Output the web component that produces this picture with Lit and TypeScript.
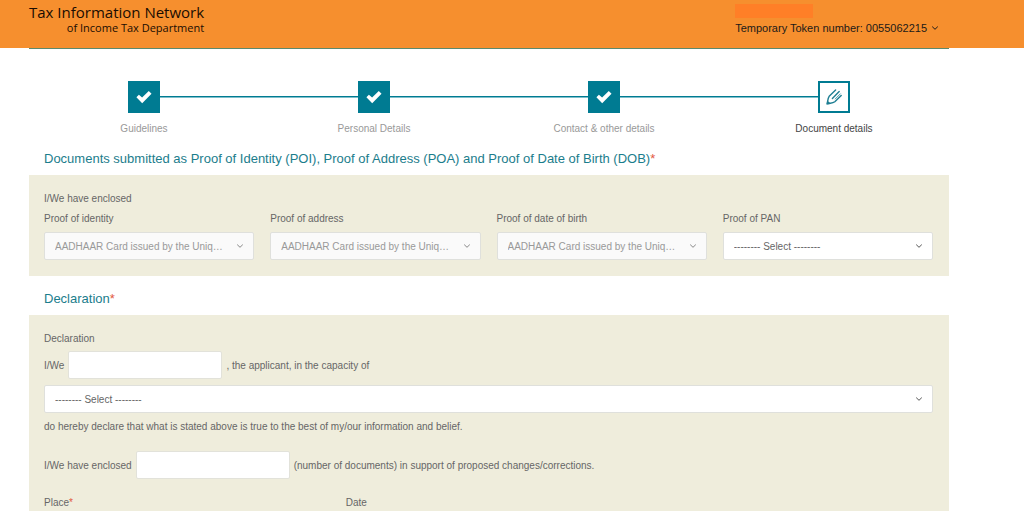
import { LitElement, html, css } from "lit";
import { customElement, property } from "lit/decorators.js";
import { classMap } from "lit/directives/class-map.js";

const chevron = html`<svg class="chevron" viewBox="0 0 8 8" width="8" height="8" aria-hidden="true">
  <path d="M1.2 2.6 4 5.3 6.8 2.6" fill="none" stroke="currentColor" stroke-width="1" />
</svg>`;

const check = html`<svg viewBox="0 0 16 16" width="16" height="16" aria-hidden="true">
  <path d="M0.4 8.2 2.9 5.7 6.1 8.6 12.8 2 15.5 4.7 6.2 14.2Z" fill="#fff" />
</svg>`;

const pencil = html`<svg viewBox="0 0 16 16" width="16" height="16" aria-hidden="true">
  <g fill="none" stroke="#1f7f93" stroke-width="1.4" stroke-linejoin="round" stroke-linecap="round">
    <path d="M9.6 0.9 3.2 7.2C2 8.6 1.8 11.6 1.2 14.8 4.4 14.2 7.4 14 8.8 12.8L15.2 6.4" />
    <path d="M6.4 9.6 13.2 2.4" />
  </g>
  <path d="M9 10.2 14.6 4.6" stroke="#1f7f93" stroke-width="0.8" />
  <path d="M0.4 15.6 1.3 11.4 4.8 14.6Z" fill="#1f7f93" />
</svg>`;

@customElement("select-field")
class SelectField extends LitElement {
  @property() label = "";
  @property() value = "-------- Select --------";
  @property({ type: Boolean }) locked = false;
  @property({ type: Boolean }) bare = false;

  static styles = css`
    :host { display: block; min-width: 0; }
    .caption { display: block; line-height: 15px; margin-bottom: 6px; }
    .box { display: grid; align-items: center; }
    select {
      grid-area: 1 / 1; appearance: none; box-sizing: border-box; width: 100%; min-width: 0;
      height: 28px; margin: 0; padding: 0 25px 0 10px; border: 1px solid #dfe0dc; border-radius: 2px;
      background: #fff; color: #666; font: inherit; text-overflow: ellipsis; overflow: hidden; white-space: nowrap;
    }
    select:disabled { background: #fafafa; color: #999; opacity: 1; }
    .chevron { grid-area: 1 / 1; justify-self: end; margin-right: 10px; pointer-events: none; color: #555; }
    .locked .chevron { color: #888; }
  `;

  render() {
    return html`
      ${this.bare ? "" : html`<label class="caption" for="field">${this.label}</label>`}
      <div class=${classMap({ box: true, locked: this.locked })}>
        <select id="field" aria-label=${this.label} ?disabled=${this.locked}><option>${this.value}</option></select>
        ${chevron}
      </div>`;
  }
}

@customElement("app-root")
class AppRoot extends LitElement {
  private steps = ["Guidelines", "Personal Details", "Contact & other details", "Document details"];
  private proofs = ["Proof of identity", "Proof of address", "Proof of date of birth"];
  private card = "AADHAAR Card issued by the Unique Identification Authority of India";

  static styles = css`
    :host {
      display: block; height: 100vh; overflow: hidden; background: #fff; color: #666;
      font: 10px/15px "Liberation Sans", Arial, sans-serif;
    }
    header {
      display: flex; justify-content: space-between; box-sizing: border-box; height: 48px;
      padding: 4px 85px 0 29px; background: #f68f2e; color: #1c1a18;
    }
    .brand { text-align: right; font-family: "Open Sans", "Noto Sans", sans-serif; color: #1a0d02; }
    .brand-name { font-size: 15px; line-height: 17px; }
    .brand-sub { font-size: 11px; line-height: 14px; font-weight: 500; }
    .name { width: 78px; height: 14px; background: #ff7f27; }
    .token {
      display: flex; align-items: center; gap: 4px; margin-top: 3px; padding: 0; border: 0;
      background: none; color: inherit; font: inherit; font-size: 11px; line-height: 14px;
    }
    main { margin: 0 75px 0 29px; border-top: 1px solid #5c8a6c; }
    .steps { display: grid; grid-template-columns: repeat(4, 1fr); margin: 0; padding: 32px 0 0; list-style: none; }
    .step { display: grid; grid-template-columns: 1fr 32px 1fr; align-items: center; row-gap: 8px; color: #999; }
    .rail { height: 1px; background: #007b92; border-bottom: 1px solid #7fbfcb; }
    .step:first-child .rail:first-child, .step:last-child .after { visibility: hidden; }
    .mark { display: grid; place-items: center; box-sizing: border-box; height: 32px; background: #007b92; }
    .step-name { grid-column: 1 / -1; text-align: center; }
    .current { color: #444; }
    .current .mark { background: #fff; border: 2px solid #007b92; }
    h2 { margin: 0; padding: 12px 15px 6px; font-size: 13px; line-height: 21px; font-weight: 400; color: #1b7d8c; }
    .req { color: #e2583e; }
    .panel { padding: 16px 16px 16px 15px; background: #efeddc; }
    p { margin: 0 0 5px; }
    .proofs { display: grid; grid-template-columns: repeat(4, 1fr); gap: 16px; }
    .line { display: flex; align-items: center; gap: 4px; margin-bottom: 6px; }
    input {
      box-sizing: border-box; width: 154px; height: 28px; padding: 0 9px; border: 1px solid #e2e2da;
      border-radius: 2px; background: #fff; color: #666; font: inherit;
    }
    .capacity { margin-bottom: 6px; }
    .statement { margin-bottom: 17px; }
    .enclosed { margin-bottom: 16px; }
    .signing { display: grid; grid-template-columns: repeat(3, 1fr); gap: 16px; }
    .signing label { display: block; margin-bottom: 6px; }
    .signing input { width: 100%; }
  `;

  render() {
    const last = this.steps.length - 1;
    return html`
      <header>
        <div class="brand">
          <div class="brand-name">Tax Information Network</div>
          <div class="brand-sub">of Income Tax Department</div>
        </div>
        <div>
          <div class="name"></div>
          <button class="token" type="button">Temporary Token number: 0055062215 ${chevron}</button>
        </div>
      </header>
      <main>
        <ol class="steps">
          ${this.steps.map((name, i) => html`
            <li class=${classMap({ step: true, current: i === last })}>
              <span class="rail"></span>
              <span class="mark">${i === last ? pencil : check}</span>
              <span class="rail after"></span>
              <span class="step-name">${name}</span>
            </li>`)}
        </ol>
        <h2>Documents submitted as Proof of Identity (POI), Proof of Address (POA) and Proof of Date of Birth (DOB)<span class="req">*</span></h2>
        <section class="panel">
          <p>I/We have enclosed</p>
          <div class="proofs">
            ${this.proofs.map((p) => html`<select-field label=${p} value=${this.card} locked></select-field>`)}
            <select-field label="Proof of PAN"></select-field>
          </div>
        </section>
        <h2>Declaration<span class="req">*</span></h2>
        <section class="panel">
          <p>Declaration</p>
          <div class="line">
            <label for="applicant">I/We</label>
            <input id="applicant" type="text" />
            <span>, the applicant, in the capacity of</span>
          </div>
          <select-field class="capacity" label="Capacity" bare></select-field>
          <p class="statement">do hereby declare that what is stated above is true to the best of my/our information and belief.</p>
          <div class="line enclosed">
            <label for="count">I/We have enclosed</label>
            <input id="count" type="text" />
            <span>(number of documents) in support of proposed changes/corrections.</span>
          </div>
          <div class="signing">
            <div><label for="place">Place<span class="req">*</span></label><input id="place" type="text" /></div>
            <div><label for="date">Date</label><input id="date" type="text" /></div>
          </div>
        </section>
      </main>`;
  }
}
